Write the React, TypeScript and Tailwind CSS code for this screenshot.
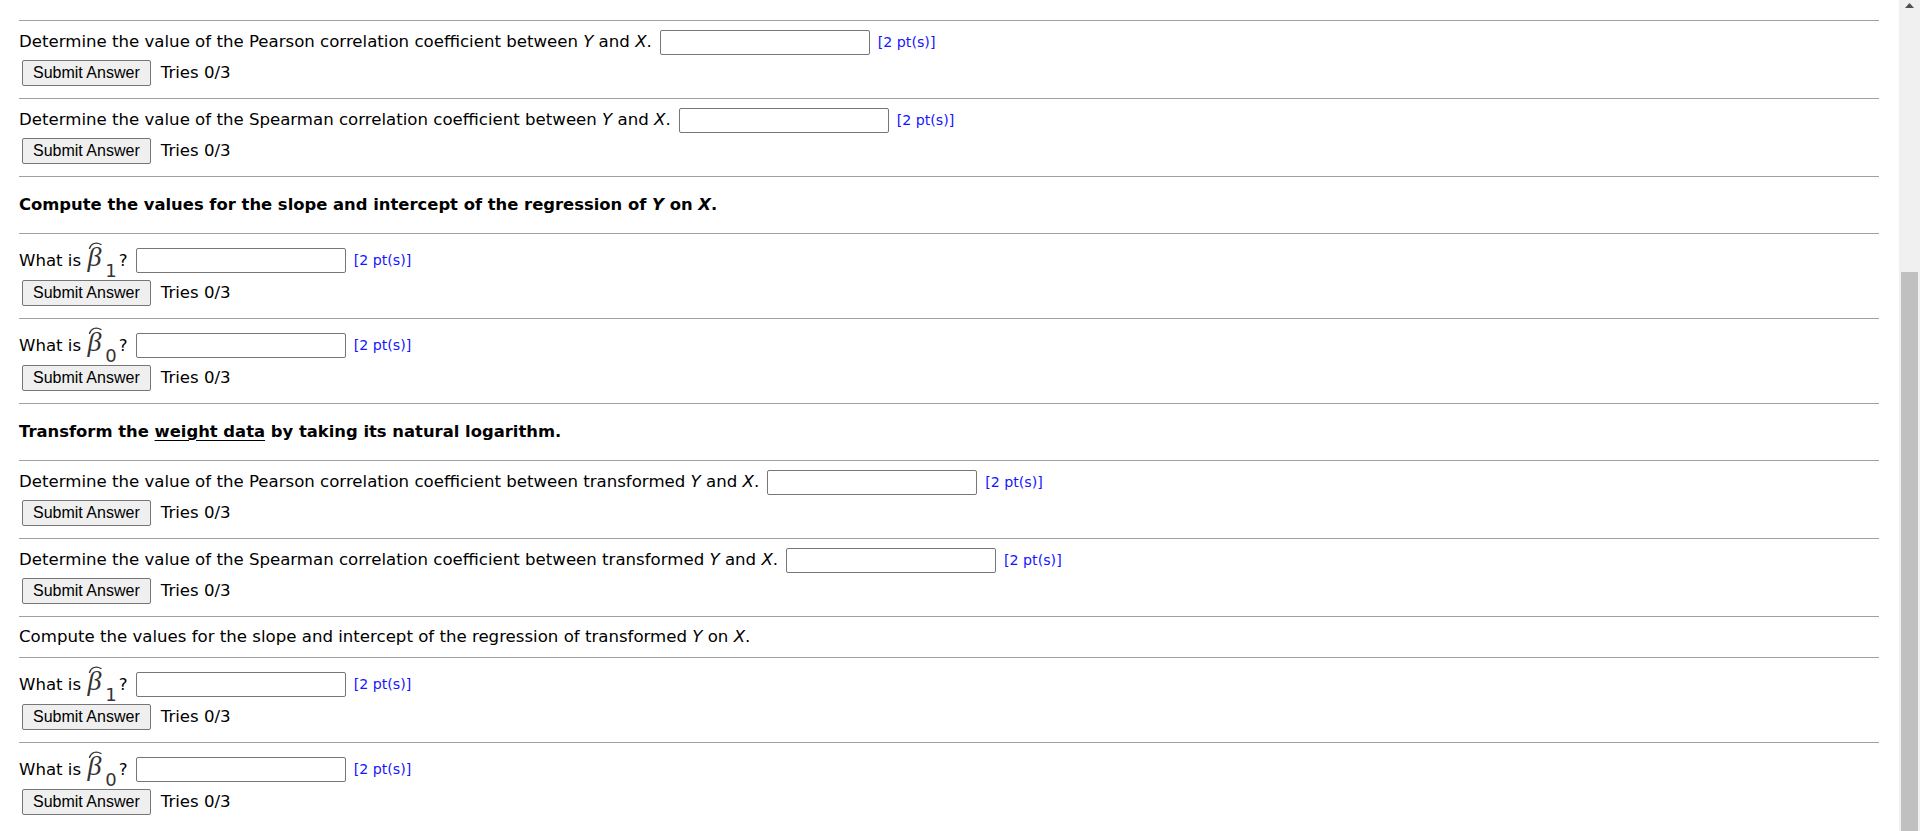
import React from "react"

function Field() {
  return (
    <input
      type="text"
      className="ml-[8px] h-[25px] w-[210px] rounded-[2px] border border-[#767676] bg-white"
    />
  )
}

function Pts() {
  return <span className="ml-[8px] text-[14.2px] text-[#1515ff]">[2 pt(s)]</span>
}

function SubmitRow({ top = "mt-[5px]" }: { top?: string }) {
  return (
    <div className={`${top} flex h-[26px] items-center`}>
      <button className="ml-[3px] h-[26px] rounded-[2px] border border-[#767676] bg-[#efefef] px-[10px] font-['Liberation_Sans',Arial,sans-serif] text-[16px] leading-none text-black">
        Submit Answer
      </button>
      <span className="ml-[10px]">Tries 0/3</span>
    </div>
  )
}

function Question({ children }: { children: React.ReactNode }) {
  return (
    <div className="border-t border-[#a0a0a0] pt-[9px] pb-[12px]">
      <div className="flex h-[25px] items-center">
        <span className="whitespace-pre">{children}</span>
        <Field />
        <Pts />
      </div>
      <SubmitRow />
    </div>
  )
}

function Beta({ sub }: { sub: string }) {
  return (
    <>
      <span className="relative ml-[1px] font-['Liberation_Serif',serif] text-[28px] italic leading-[0px] text-[#333]">
        β
        {/* hat */}
        <svg className="absolute left-[1px] top-[0px]" width="15" height="8" viewBox="0 0 15 8">
          <path d="M1.5 7.5 C3 2.5 8 0.5 13 3.5" fill="none" stroke="#333" strokeWidth="1.3" strokeLinecap="round" />
        </svg>
      </span>
      <span className="ml-[4px] mr-[2px] align-[-11px] text-[18px] leading-[0px] text-[#333]">{sub}</span>
    </>
  )
}

function BetaQuestion({ sub }: { sub: string }) {
  return (
    <div className="border-t border-[#a0a0a0] pt-[10px] pb-[12px]">
      <div className="flex h-[33px] items-center">
        <span className="h-[20px] whitespace-pre leading-[20px]">
          {"What is "}
          <Beta sub={sub} />?
        </span>
        <Field />
        <Pts />
      </div>
      <SubmitRow top="mt-[3px]" />
    </div>
  )
}

function Heading({ children }: { children: React.ReactNode }) {
  return (
    <div className="border-t border-[#a0a0a0] py-[18px]">
      <p className="h-[20px] whitespace-pre text-[16.4px] font-bold leading-[20px]">{children}</p>
    </div>
  )
}

export default function App() {
  return (
    <div className="flex h-[831px] overflow-hidden bg-white font-['DejaVu_Sans',Verdana,sans-serif] text-[16.6px] text-black">
      <main className="flex-1 pl-[19px] pr-[20px] pt-[20px]">
        <Question>
          Determine the value of the Pearson correlation coefficient between <i>Y</i> and <i>X</i>.
        </Question>
        <Question>
          Determine the value of the Spearman correlation coefficient between <i>Y</i> and <i>X</i>.
        </Question>
        <Heading>
          Compute the values for the slope and intercept of the regression of <i>Y</i> on <i>X</i>.
        </Heading>
        <BetaQuestion sub="1" />
        <BetaQuestion sub="0" />
        <Heading>
          Transform the <span className="underline underline-offset-[3px]">weight data</span> by taking its natural logarithm.
        </Heading>
        <Question>
          Determine the value of the Pearson correlation coefficient between transformed <i>Y</i> and <i>X</i>.
        </Question>
        <Question>
          Determine the value of the Spearman correlation coefficient between transformed <i>Y</i> and <i>X</i>.
        </Question>
        <div className="border-t border-[#a0a0a0] pt-[10px] pb-[10px]">
          <p className="h-[20px] whitespace-pre leading-[20px]">
            Compute the values for the slope and intercept of the regression of transformed <i>Y</i> on <i>X</i>.
          </p>
        </div>
        <BetaQuestion sub="1" />
        <BetaQuestion sub="0" />
      </main>

      {/* scrollbar */}
      <div className="flex w-[21px] flex-col items-center bg-[#f0f0f0]">
        <div className="flex h-[17px] w-full items-start justify-center pt-[3px]">
          <svg width="9" height="5" viewBox="0 0 9 5">
            <polygon points="4.5,0 9,5 0,5" fill="#505050" />
          </svg>
        </div>
        <div className="mt-[255px] w-[17px] flex-1 bg-[#c0c0c0]" />
      </div>
    </div>
  )
}
